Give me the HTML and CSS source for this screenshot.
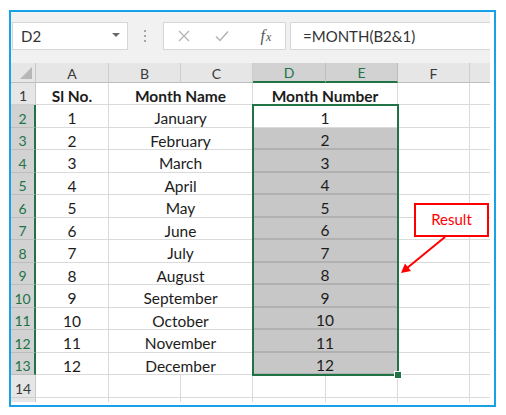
FILE: index.html
```html
<!DOCTYPE html>
<html>
<head>
<meta charset="utf-8">
<link rel="stylesheet" href="styles.css">
</head>
<body>
<div class="frame">
  <div class="toolbar">
    <div class="namebox"><span class="nb-text">D2</span><span class="dd"></span></div>
    <div class="dots"><i></i><i></i><i></i></div>
    <div class="fxbox">
      <span class="slot"><svg width="12" height="12" viewBox="0 0 12 12"><path d="M1 1 L11 11 M11 1 L1 11" stroke="#b3b3b3" stroke-width="1.3" fill="none"/></svg></span>
      <span class="slot"><svg width="14" height="12" viewBox="0 0 14 12"><path d="M1 6.5 L5 10.5 L13 1.5" stroke="#b3b3b3" stroke-width="1.5" fill="none"/></svg></span>
      <span class="slot fx"><i>f</i><i class="x">x</i></span>
    </div>
    <div class="formula">=MONTH(B2&amp;1)</div>
  </div>

  <div class="sheet">
    <div class="corner"><span class="tri"></span></div>
    <div class="ch">A</div><div class="ch">B</div><div class="ch">C</div>
    <div class="ch sel">D</div><div class="ch sel">E</div><div class="ch">F</div><div class="ch last"></div>

    <div class="rh">1</div><div class="c b">Sl No.</div><div class="c b m2">Month Name</div><div class="c b m2">Month Number</div><div class="c"></div><div class="c last"></div>

    <div class="rh sel">2</div><div class="c">1</div><div class="c m2">January</div><div class="c m2">1</div><div class="c"></div><div class="c last"></div>
    <div class="rh sel">3</div><div class="c">2</div><div class="c m2">February</div><div class="c m2 fill">2</div><div class="c"></div><div class="c last"></div>
    <div class="rh sel">4</div><div class="c">3</div><div class="c m2">March</div><div class="c m2 fill">3</div><div class="c"></div><div class="c last"></div>
    <div class="rh sel">5</div><div class="c">4</div><div class="c m2">April</div><div class="c m2 fill">4</div><div class="c"></div><div class="c last"></div>
    <div class="rh sel">6</div><div class="c">5</div><div class="c m2">May</div><div class="c m2 fill">5</div><div class="c"></div><div class="c last"></div>
    <div class="rh sel">7</div><div class="c">6</div><div class="c m2">June</div><div class="c m2 fill">6</div><div class="c"></div><div class="c last"></div>
    <div class="rh sel">8</div><div class="c">7</div><div class="c m2">July</div><div class="c m2 fill">7</div><div class="c"></div><div class="c last"></div>
    <div class="rh sel">9</div><div class="c">8</div><div class="c m2">August</div><div class="c m2 fill">8</div><div class="c"></div><div class="c last"></div>
    <div class="rh sel">10</div><div class="c">9</div><div class="c m2">September</div><div class="c m2 fill">9</div><div class="c"></div><div class="c last"></div>
    <div class="rh sel">11</div><div class="c">10</div><div class="c m2">October</div><div class="c m2 fill">10</div><div class="c"></div><div class="c last"></div>
    <div class="rh sel">12</div><div class="c">11</div><div class="c m2">November</div><div class="c m2 fill">11</div><div class="c"></div><div class="c last"></div>
    <div class="rh sel">13</div><div class="c">12</div><div class="c m2">December</div><div class="c m2 fill">12</div><div class="c"></div><div class="c last"></div>

    <div class="rh">14</div><div class="c"></div><div class="c"></div><div class="c"></div><div class="c"></div><div class="c"></div><div class="c"></div><div class="c last"></div>

    <div class="rh stub"></div><div class="c stub"></div><div class="c stub"></div><div class="c stub"></div><div class="c stub"></div><div class="c stub"></div><div class="c stub"></div><div class="c stub last"></div>

    <div class="selection"><span class="handle"></span></div>
  </div>

  <div class="callout">Result</div>
  <svg class="arrow" width="483" height="393" viewBox="0 0 483 393">
    <line x1="434" y1="225" x2="395.5" y2="256.5" stroke="#ff0000" stroke-width="2"/>
    <polygon points="390,261 400,259 394,251.5" fill="#ff0000"/>
  </svg>
</div>
</body>
</html>
```

FILE: styles.css
```css
html, body {
  margin: 0;
  padding: 0;
  background: #ffffff;
}

body {
  font-family: Lato, "Open Sans", sans-serif;
  color: #1c1c1c;
}

.frame {
  position: relative;
  margin: 10px 0 0 9px;
  width: 487px;
  height: 397px;
  box-sizing: border-box;
  border: 2px solid #17a1e6;
  padding: 0 4px 3px 0;
  overflow: hidden;
}

/* ---------- toolbar ---------- */
.toolbar {
  display: flex;
  height: 51px;
  box-sizing: border-box;
  padding: 10px 0 0 1px;
  background: #f1f1f1;
  overflow: hidden;
}

.namebox {
  width: 116px;
  height: 28px;
  box-sizing: border-box;
  border: 1px solid #d6d6d6;
  background: #ffffff;
  display: flex;
  align-items: center;
  padding-left: 8px;
  font-size: 15px;
  color: #333;
}

.dd {
  margin-left: auto;
  margin-right: 7px;
  width: 0;
  height: 0;
  border-left: 4px solid transparent;
  border-right: 4px solid transparent;
  border-top: 4px solid #6a6a6a;
  margin-top: -2px;
}

.dots {
  margin: 0 17px 0 16px;
  width: 2px;
  height: 28px;
  display: flex;
  flex-direction: column;
  justify-content: center;
  gap: 3px;
}

.dots i {
  display: block;
  width: 2px;
  height: 2px;
  background: #a6a6a6;
}

.fxbox {
  width: 123px;
  height: 28px;
  box-sizing: border-box;
  border: 1px solid #d6d6d6;
  background: #ffffff;
  display: flex;
  align-items: center;
  padding-left: 1px;
}

.slot {
  width: 40px;
  display: flex;
  justify-content: center;
  align-items: center;
}

.fx {
  margin-left: 6px;
  font-family: "Liberation Serif", serif;
  font-size: 16px;
  color: #555;
}

.fx .x {
  font-size: 12px;
  margin-left: 1px;
  margin-top: 3px;
}

.formula {
  flex: 1;
  margin-left: 4px;
  height: 28px;
  box-sizing: border-box;
  border: 1px solid #d6d6d6;
  border-right: none;
  background: #ffffff;
  padding-left: 12px;
  display: flex;
  align-items: center;
  font-size: 15px;
  color: #333;
  white-space: nowrap;
}

/* ---------- sheet ---------- */
.sheet {
  position: relative;
  display: grid;
  grid-template-columns: 25px 73px 72px 72px 73px 72px 72px 20px;
  grid-template-rows: 20px 22px 23px 22px 23px 22px 23px 22px 23px 22px 23px 22px 23px 22px 23px 4px;
  font-size: 15.5px;
}

.sheet > div {
  box-sizing: border-box;
  display: flex;
  align-items: center;
  justify-content: center;
}

.corner {
  position: relative;
  background: #e6e6e6;
  border-right: 1px solid #c8c8c8;
  border-bottom: 1px solid #bdbdbd;
}

.tri {
  position: absolute;
  right: 3px;
  bottom: 3px;
  width: 0;
  height: 0;
  border-left: 12px solid transparent;
  border-bottom: 12px solid #b7b7b7;
}

.ch {
  background: #e6e6e6;
  border-right: 1px solid #cdcdcd;
  border-bottom: 1px solid #bdbdbd;
  font-size: 14px;
  color: #3a3a3a;
  padding-top: 1px;
}

.ch.sel {
  background: #d2d2d2;
  color: #217346;
  border-bottom: 2px solid #217346;
  border-right-color: #bcbcbc;
}

.ch.last {
  border-right: none;
}

.rh {
  background: #e6e6e6;
  border-right: 1px solid #c8c8c8;
  border-bottom: 1px solid #cfcfcf;
  font-size: 14px;
  color: #3a3a3a;
  padding-top: 4px;
}

.rh.sel {
  background: #d2d2d2;
  color: #217346;
  border-right: 2px solid #217346;
  border-bottom-color: #bdbdbd;
}

.c {
  background: #ffffff;
  border-right: 1px solid #dadada;
  border-bottom: 1px solid #dadada;
  padding-top: 4px;
}

.c.last {
  border-right: none;
}

.c.b {
  font-weight: 700;
}

.m2 {
  grid-column: span 2;
}

.c.fill {
  background: #c7c7c7;
  border-bottom: 2px solid #b1b1b1;
  border-right-color: #c7c7c7;
}

.stub {
  border-bottom: none !important;
}

.sheet > .selection {
  position: absolute;
  grid-column: 5 / 7;
  grid-row: 3 / 15;
  top: -1px;
  left: -1px;
  right: -1px;
  bottom: -1px;
  border: 2px solid #217346;
  z-index: 2;
}

.handle {
  position: absolute;
  right: -5px;
  bottom: -5px;
  width: 6px;
  height: 6px;
  background: #217346;
  border: 1px solid #ffffff;
}

/* ---------- callout ---------- */
.callout {
  position: absolute;
  left: 403px;
  top: 191px;
  width: 75px;
  height: 34px;
  box-sizing: border-box;
  border: 2px solid #ff0000;
  background: #ffffff;
  color: #ff0000;
  font-size: 15px;
  display: flex;
  align-items: center;
  justify-content: center;
  padding-bottom: 2px;
  z-index: 3;
}

.arrow {
  position: absolute;
  left: 0;
  top: 0;
  pointer-events: none;
  z-index: 3;
}
```
